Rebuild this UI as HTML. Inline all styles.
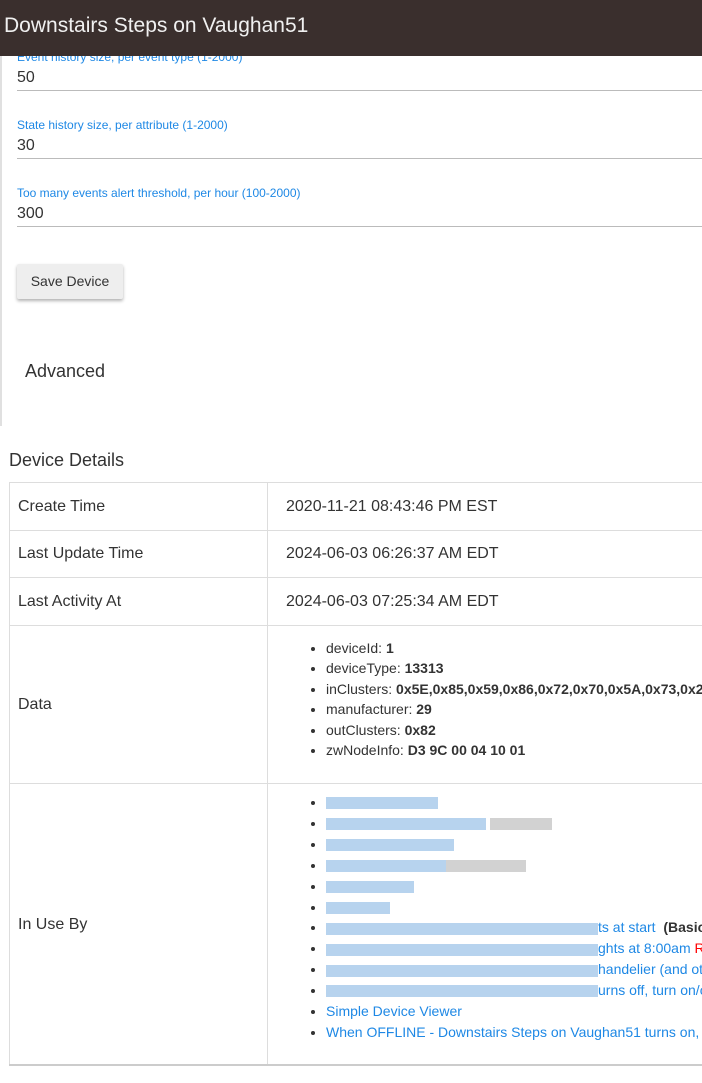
<!DOCTYPE html>
<html><head><style>
body{margin:0;width:702px;height:1083px;overflow:hidden;background:#fff;font-family:"Liberation Sans",sans-serif;position:relative;color:#333}
.hdr{position:absolute;left:0;top:0;width:702px;height:56px;background:#3a2f2d;color:#f0f0f0;font-size:21px;line-height:52px;padding-left:4px;box-sizing:border-box;z-index:2}
.vl{position:absolute;left:0;top:56px;width:2px;height:370px;background:#e0e0e0}
.lbl{position:absolute;left:17px;font-size:12px;color:#1e88e5}
.val{position:absolute;left:17px;font-size:16px;color:#333}
.ul{position:absolute;left:17px;width:685px;height:1px;background:#bbb}
.btn{position:absolute;left:17px;top:264px;width:106px;height:35px;background:#eee;box-shadow:0 2px 3px rgba(0,0,0,.3);border-radius:2px;font-size:14px;line-height:35px;text-align:center;color:#333}
table{position:absolute;left:9px;top:482px;width:720px;border-collapse:collapse;font-size:16px}
td{border:1px solid #ddd;padding:0 8px;vertical-align:middle}
td:first-child{width:241px}
td:last-child{padding-left:18px}
ul{margin:0;padding-left:40px;font-size:14px;line-height:20.4px;white-space:nowrap}
a{color:#1e88e5}
.b{display:inline-block;height:12px;background:#b7d3ee;vertical-align:middle}
.g{display:inline-block;height:12px;background:#d2d2d2;vertical-align:middle}
</style></head><body>
<div class="hdr">Downstairs Steps on Vaughan51</div>
<div class="vl"></div>
<div class="lbl" style="top:50px">Event history size, per event type (1-2000)</div>
<div class="val" style="top:69px">50</div><div class="ul" style="top:90px"></div>
<div class="lbl" style="top:118px">State history size, per attribute (1-2000)</div>
<div class="val" style="top:137px">30</div><div class="ul" style="top:158px"></div>
<div class="lbl" style="top:186px">Too many events alert threshold, per hour (100-2000)</div>
<div class="val" style="top:205px">300</div><div class="ul" style="top:226px"></div>
<div class="btn">Save Device</div>
<div style="position:absolute;left:25px;top:361px;font-size:18px;color:#333">Advanced</div>
<div style="position:absolute;left:9px;top:450px;font-size:18px;color:#333">Device Details</div>
<table>
<tr style="height:48px"><td>Create Time</td><td>2020-11-21 08:43:46 PM EST</td></tr>
<tr style="height:47px"><td>Last Update Time</td><td>2024-06-03 06:26:37 AM EDT</td></tr>
<tr style="height:48px"><td>Last Activity At</td><td>2024-06-03 07:25:34 AM EDT</td></tr>
<tr style="height:158px"><td>Data</td><td style="vertical-align:top;padding-top:12px"><ul>
<li>deviceId: <b>1</b></li><li>deviceType: <b>13313</b></li><li>inClusters: <b>0x5E,0x85,0x59,0x86,0x72,0x70,0x5A,0x73,0x25</b></li><li>manufacturer: <b>29</b></li><li>outClusters: <b>0x82</b></li><li>zwNodeInfo: <b>D3 9C 00 04 10 01</b></li></ul></td></tr>
<tr style="height:282px"><td>In Use By</td><td style="vertical-align:top;padding-top:8px"><ul style="line-height:20.9px">
<li><span class="b" style="width:112px"></span></li>
<li><span class="b" style="width:160px"></span> <span class="g" style="width:62px"></span></li>
<li><span class="b" style="width:128px"></span></li>
<li><span class="b" style="width:120px"></span><span class="g" style="width:80px"></span></li>
<li><span class="b" style="width:88px"></span></li>
<li><span class="b" style="width:64px"></span></li>
<li><span class="b" style="width:272px"></span><a>ts at start</a> &nbsp;<b>(Basic</b></li>
<li><span class="b" style="width:272px"></span><a>ghts at 8:00am</a> <span style="color:red">R</span></li>
<li><span class="b" style="width:272px"></span><a>handelier (and ot</a></li>
<li><span class="b" style="width:272px"></span><a>urns off, turn on/o</a></li>
<li><a>Simple Device Viewer</a></li>
<li><a>When OFFLINE - Downstairs Steps on Vaughan51 turns on, tu</a></li>
</ul></td></tr>
</table>
<div style="position:absolute;left:9px;top:1064px;width:693px;height:2px;background:#ccc"></div>
</body></html>
